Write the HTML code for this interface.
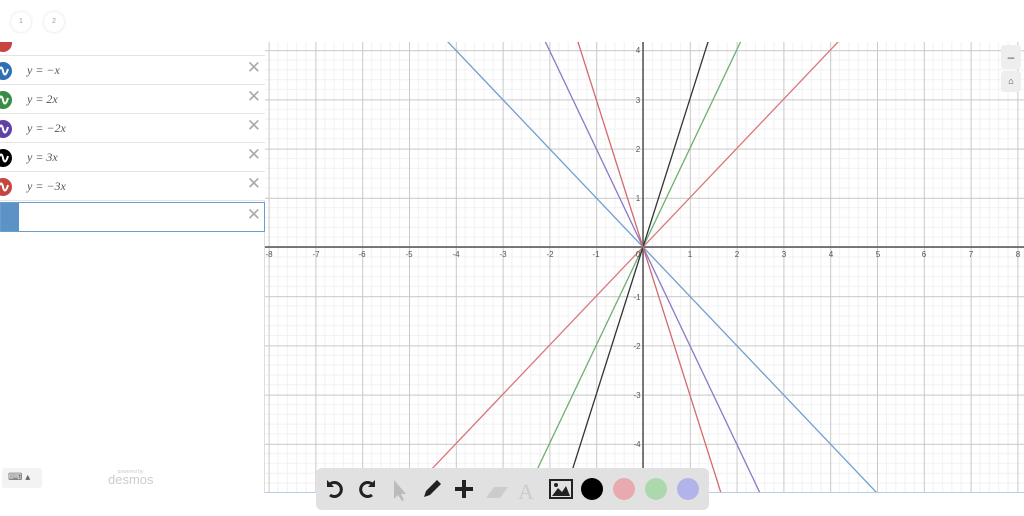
<!DOCTYPE html>
<html style="overflow:hidden"><head><style>
html,body{margin:0;width:1024px;height:516px;overflow:hidden}
body{background:#fff;font-family:"Liberation Sans",sans-serif;position:relative}
.row{position:absolute;left:0;width:265px;height:28px;border-bottom:1px solid #e4e4e4;background:#fff;overflow:hidden}
.row .ic{position:absolute;left:-6px;top:6px;width:18px;height:18px;border-radius:50%}
.row .ic svg{position:absolute;left:3px;top:4px}
.row .t{position:absolute;left:27px;top:7px;font-family:"Liberation Serif",serif;font-style:italic;font-size:12px;color:#555}
.row .x{position:absolute;right:4px;top:2px;color:#aaa;font-size:17px;font-weight:300}
.tb{position:absolute;left:316px;top:468px;width:393px;height:42px;background:#e1e1e1;border-radius:6px;overflow:hidden}
</style></head><body>
<div style="position:absolute;left:11px;top:12px;width:20px;height:20px;border-radius:50%;box-shadow:0 0 3px #ddd;font-size:7px;color:#99a;text-align:center;line-height:20px">1</div>
<div style="position:absolute;left:44px;top:12px;width:20px;height:20px;border-radius:50%;box-shadow:0 0 3px #ddd;font-size:7px;color:#99a;text-align:center;line-height:20px">2</div>

<svg style="position:absolute;left:265px;top:42px" width="759" height="451" viewBox="265 42 759 451">
<defs>
<pattern id="g" patternUnits="userSpaceOnUse" x="643" y="247" width="46.8" height="49.2">
<g stroke="#f1f1f1" stroke-width="1">
<line x1="9.36" y1="0" x2="9.36" y2="49.2"/><line x1="18.72" y1="0" x2="18.72" y2="49.2"/><line x1="28.08" y1="0" x2="28.08" y2="49.2"/><line x1="37.44" y1="0" x2="37.44" y2="49.2"/>
<line y1="9.84" x1="0" y2="9.84" x2="46.8"/><line y1="19.68" x1="0" y2="19.68" x2="46.8"/><line y1="29.52" x1="0" y2="29.52" x2="46.8"/><line y1="39.36" x1="0" y2="39.36" x2="46.8"/>
</g>
<line x1="0.5" y1="0" x2="0.5" y2="49.2" stroke="#c8c8c8"/><line x1="0" y1="0.5" x2="46.8" y2="0.5" stroke="#c8c8c8"/>
</pattern>
</defs>
<rect x="265" y="42" width="759" height="451" fill="#fff"/>
<rect x="265" y="42" width="759" height="451" fill="url(#g)"/>
<line x1="643" y1="42" x2="643" y2="493" stroke="#555" stroke-width="1.5"/>
<line x1="265" y1="247" x2="1024" y2="247" stroke="#555" stroke-width="1.5"/>
<g transform="translate(643,247) scale(46.8,-49.2)" fill="none" stroke-width="1.3">
<line x1="-9" y1="-9" x2="9" y2="9" stroke="#d9777a" vector-effect="non-scaling-stroke"/>
<line x1="-9" y1="9" x2="9" y2="-9" stroke="#6f9fd0" vector-effect="non-scaling-stroke"/>
<line x1="-5" y1="-10" x2="5" y2="10" stroke="#6fae72" vector-effect="non-scaling-stroke"/>
<line x1="-5" y1="10" x2="5" y2="-10" stroke="#8a78c8" vector-effect="non-scaling-stroke"/>
<line x1="-3" y1="-9" x2="3" y2="9" stroke="#333" vector-effect="non-scaling-stroke"/>
<line x1="-3" y1="9" x2="3" y2="-9" stroke="#d26a6e" vector-effect="non-scaling-stroke"/>
</g>
<g font-size="8" fill="#555" text-anchor="middle">
<text x="269" y="257">-8</text><text x="316" y="257">-7</text><text x="362" y="257">-6</text><text x="409" y="257">-5</text><text x="456" y="257">-4</text><text x="503" y="257">-3</text><text x="550" y="257">-2</text><text x="596" y="257">-1</text><text x="638" y="257">0</text>
<text x="690" y="257">1</text><text x="737" y="257">2</text><text x="784" y="257">3</text><text x="831" y="257">4</text><text x="878" y="257">5</text><text x="924" y="257">6</text><text x="971" y="257">7</text><text x="1018" y="257">8</text>
<text x="638" y="53">4</text><text x="638" y="103">3</text><text x="638" y="152">2</text><text x="638" y="201">1</text>
<text x="637" y="300">-1</text><text x="637" y="349">-2</text><text x="637" y="398">-3</text><text x="637" y="447">-4</text>
</g>
<line x1="265" y1="492.5" x2="1024" y2="492.5" stroke="#b9cbe8"/>
</svg>
<div style="position:absolute;left:264px;top:42px;width:1px;height:451px;background:#ddd"></div>

<div style="position:absolute;left:1001px;top:45px;width:20px;height:24px;background:#eee;border-radius:3px;text-align:center;font-size:12px;line-height:24px;color:#444">–</div>
<div style="position:absolute;left:1001px;top:71px;width:20px;height:21px;background:#eee;border-radius:3px;text-align:center;font-size:9px;line-height:21px;color:#444">⌂</div>

<div class="row" style="top:42px;height:13px"><div class="ic" style="top:-8px;background:#c74440"></div></div>
<div class="row" style="top:56px"><div class="ic" style="background:#2d70b3"><svg width="12" height="10"><path d="M1 7 C3 0 5 0 6 5 C7 10 9 10 11 3" stroke="#fff" stroke-width="2" fill="none"/></svg></div><div class="t">y = −x</div><div class="x">✕</div></div>
<div class="row" style="top:85px"><div class="ic" style="background:#388c46"><svg width="12" height="10"><path d="M1 7 C3 0 5 0 6 5 C7 10 9 10 11 3" stroke="#fff" stroke-width="2" fill="none"/></svg></div><div class="t">y = 2x</div><div class="x">✕</div></div>
<div class="row" style="top:114px"><div class="ic" style="background:#6042a6"><svg width="12" height="10"><path d="M1 7 C3 0 5 0 6 5 C7 10 9 10 11 3" stroke="#fff" stroke-width="2" fill="none"/></svg></div><div class="t">y = −2x</div><div class="x">✕</div></div>
<div class="row" style="top:143px"><div class="ic" style="background:#000"><svg width="12" height="10"><path d="M1 7 C3 0 5 0 6 5 C7 10 9 10 11 3" stroke="#fff" stroke-width="2" fill="none"/></svg></div><div class="t">y = 3x</div><div class="x">✕</div></div>
<div class="row" style="top:172px"><div class="ic" style="background:#c74440"><svg width="12" height="10"><path d="M1 7 C3 0 5 0 6 5 C7 10 9 10 11 3" stroke="#fff" stroke-width="2" fill="none"/></svg></div><div class="t">y = −3x</div><div class="x">✕</div></div>
<div class="row" style="top:202px;border:1px solid #6a9ccc;width:263px"><div style="position:absolute;left:0;top:0;width:18px;height:28px;background:#5b93c6"></div><div class="x" style="right:3px">✕</div></div>

<div style="position:absolute;left:2px;top:468px;width:40px;height:20px;background:#f3f3f3;border-radius:3px;font-size:10px;color:#666;line-height:20px;padding-left:6px;box-sizing:border-box;overflow:hidden">⌨ ▴</div>
<div style="position:absolute;left:108px;top:469px;font-size:5px;color:#ccc;width:45px;text-align:center;line-height:6px">powered by</div>
<div style="position:absolute;left:108px;top:472px;font-size:13px;color:#ccc;width:45px;text-align:center;line-height:15px">desmos</div>

<div class="tb">
<svg width="393" height="42" style="position:absolute;left:0;top:0">
<g fill="none" stroke="#222" stroke-width="3">
<path d="M14 16 A7 7 0 1 1 14 27"/><path d="M56 16 A7 7 0 1 0 56 27"/>
</g>
<path d="M11 12 L11 19 L18 19Z" fill="#222"/><path d="M59 12 L59 19 L52 19Z" fill="#222"/>
<path d="M78 12 L78 31 L82 27 L86 33 L88 32 L85 26 L90 26Z" fill="#bbb"/>
<path d="M108 29 L110 23 L121 12 L125 16 L114 27Z" fill="#222"/>
<path d="M146 12h4v7h7v4h-7v7h-4v-7h-7v-4h7z" fill="#222"/>
<path d="M170 30 L178 19 L192 19 L184 30Z" fill="#ccc"/>
<text x="202" y="31" font-family="Liberation Serif" font-size="22" fill="#ccc">A</text>
<rect x="234" y="12" width="22" height="18" fill="none" stroke="#222" stroke-width="2"/>
<path d="M236 28 L242 20 L246 24 L250 18 L254 28Z" fill="#222"/><circle cx="240" cy="17" r="2" fill="#222"/>
<circle cx="276" cy="21" r="11" fill="#000"/>
<circle cx="308" cy="21" r="11" fill="#e8a9b0"/>
<circle cx="340" cy="21" r="11" fill="#add8ad"/>
<circle cx="372" cy="21" r="11" fill="#b3b3ec"/>
</svg>
</div>
</body></html>
